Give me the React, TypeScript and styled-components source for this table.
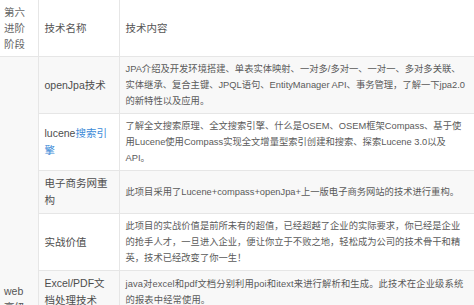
import React from "react";
import styled, { createGlobalStyle } from "styled-components";

const GlobalStyle = createGlobalStyle`
  html, body {
    margin: 0;
    padding: 0;
    background: #ffffff;
    overflow: hidden;
  }
  body {
    font-family: "Liberation Sans", "Noto Sans CJK SC", sans-serif;
    color: #555;
  }
`;

const Table = styled.table`
  width: 474px;
  table-layout: fixed;
  border-collapse: collapse;
  border-style: hidden;
  font-family: "Liberation Sans", "Noto Sans CJK SC", sans-serif;
`;

const Row = styled.tr<{ $striped?: boolean }>`
  background: ${(p) => (p.$striped ? "#f8f8f8" : "#ffffff")};
`;

const HeadCell = styled.th<{ $first?: boolean }>`
  border: 1px solid #e6e6e6;
  padding: ${(p) => (p.$first ? "4px 4px" : "4px 6px")};
  font-size: 10.5px;
  line-height: 16px;
  font-weight: normal;
  text-align: left;
  vertical-align: middle;
  color: ${(p) => (p.$first ? "#666" : "#555")};
`;

const StageCell = styled.td`
  border: 1px solid #e6e6e6;
  padding: 226px 4px 0 4px;
  font-size: 10.5px;
  line-height: 16px;
  text-align: left;
  vertical-align: top;
  color: #555;
`;

const NameCell = styled.td`
  border: 1px solid #e6e6e6;
  padding: 4px 5px 4px 6px;
  font-size: 10.5px;
  line-height: 17px;
  vertical-align: middle;
  color: #4d4d4d;
`;

const DescCell = styled.td<{ $spacing?: number }>`
  border: 1px solid #e6e6e6;
  padding: 4px 9px 4px 6px;
  font-size: 9.3px;
  line-height: 16px;
  letter-spacing: ${(p) => p.$spacing ?? 0}px;
  vertical-align: middle;
  color: #5a5a5a;
`;

const Link = styled.span`
  color: #3d8bd8;
`;

type Item = { name: React.ReactNode; desc: string; spacing?: number };

const items: Item[] = [
  {
    name: "openJpa技术",
    desc:
      "JPA介绍及开发环境搭建、单表实体映射、一对多/多对一、一对一、多对多关联、实体继承、复合主键、JPQL语句、EntityManager API、事务管理，了解一下jpa2.0的新特性以及应用。",
  },
  {
    name: (
      <>
        lucene<Link>搜索引擎</Link>
      </>
    ),
    desc:
      "了解全文搜索原理、全文搜索引擎、什么是OSEM、OSEM框架Compass、基于使用Lucene使用Compass实现全文增量型索引创建和搜索、探索Lucene 3.0以及API。",
  },
  {
    name: "电子商务网重构",
    desc: "此项目采用了Lucene+compass+openJpa+上一版电子商务网站的技术进行重构。",
  },
  {
    name: "实战价值",
    desc:
      "此项目的实战价值是前所未有的超值，已经超越了企业的实际要求，你已经是企业的抢手人才，一旦进入企业，便让你立于不败之地，轻松成为公司的技术骨干和精英，技术已经改变了你一生！",
  },
  {
    name: "Excel/PDF文档处理技术",
    desc:
      "java对excel和pdf文档分别利用poi和itext来进行解析和生成。此技术在企业级系统的报表中经常使用。",
    spacing: 0.12,
  },
  {
    name: "JavaMail邮件技术",
    desc: "JavaMail介绍、邮件发送与接收、附件处理，在企业项目中实现邮件通知功能。",
  },
];

export default function App() {
  return (
    <>
      <GlobalStyle />
      <Table>
        <colgroup>
          <col style={{ width: 38 }} />
          <col style={{ width: 81 }} />
          <col />
        </colgroup>
        <thead>
          <Row>
            <HeadCell $first>第六进阶阶段</HeadCell>
            <HeadCell>技术名称</HeadCell>
            <HeadCell>技术内容</HeadCell>
          </Row>
        </thead>
        <tbody>
          {items.map((it, i) => (
            <Row key={i} $striped={i % 2 === 0}>
              {i === 0 && <StageCell rowSpan={items.length}>web高级框架</StageCell>}
              <NameCell>{it.name}</NameCell>
              <DescCell $spacing={it.spacing}>{it.desc}</DescCell>
            </Row>
          ))}
        </tbody>
      </Table>
    </>
  );
}
